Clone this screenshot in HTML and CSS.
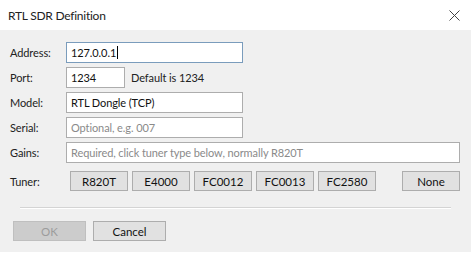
FILE: index.html
```html
<!DOCTYPE html>
<html>
<head>
<meta charset="utf-8">
<link rel="stylesheet" href="styles.css">
</head>
<body>
<div class="dialog">
  <div class="titlebar">
    <span class="title">RTL SDR Definition</span>
    <svg class="close" width="11" height="11" viewBox="0 0 11 11"><path d="M0.5 0.5L10.5 10.5M10.5 0.5L0.5 10.5" stroke="#444" stroke-width="1" fill="none"/></svg>
  </div>
  <div class="content">
    <div class="form">
      <label class="lbl">Address:</label>
      <div class="field"><div class="input focus w177">127.0.0.1<span class="caret"></span></div></div>
      <label class="lbl">Port:</label>
      <div class="field"><div class="input w59">1234</div><span class="hint">Default is 1234</span></div>
      <label class="lbl">Model:</label>
      <div class="field"><div class="input w177">RTL Dongle (TCP)</div></div>
      <label class="lbl">Serial:</label>
      <div class="field"><div class="input w177 ph">Optional, e.g. 007</div></div>
      <label class="lbl">Gains:</label>
      <div class="field"><div class="input w394 ph">Required, click tuner type below, normally R820T</div></div>
      <label class="lbl tunerlbl">Tuner:</label>
      <div class="field tuners">
        <div class="group">
          <button class="btn tb">R820T</button>
          <button class="btn tb">E4000</button>
          <button class="btn tb">FC0012</button>
          <button class="btn tb">FC0013</button>
          <button class="btn tb">FC2580</button>
        </div>
        <button class="btn tb">None</button>
      </div>
    </div>
    <div class="sep"></div>
    <div class="actions">
      <button class="btn ab disabled">OK</button>
      <button class="btn ab">Cancel</button>
    </div>
  </div>
</div>
</body>
</html>
```
FILE: styles.css
```css
html, body { margin: 0; padding: 0; background: #fff; }
body { font-family: "Lato", "Open Sans", sans-serif; font-size: 11px; letter-spacing: -0.1px; color: #000; width: 474px; height: 254px; overflow: hidden; }
.dialog { width: 471px; height: 252px; display: flex; flex-direction: column; }
.titlebar { height: 30px; background: #fff; display: flex; align-items: center; justify-content: space-between; padding: 0 11px 0 8px; box-sizing: border-box; }
.title { font-size: 12px; letter-spacing: -0.25px; color: #222; }
.close { display: block; }
.content { flex: 1; background: #f0f0f0; padding: 12px 0 0 0; box-sizing: border-box; }
.form { display: grid; grid-template-columns: 56px auto; row-gap: 4px; padding-left: 10px; }
.lbl { display: flex; align-items: center; height: 21px; color: #222; }
.field { display: flex; align-items: center; height: 21px; }
.input { height: 21px; box-sizing: border-box; background: #fff; border: 1px solid #adadad; padding: 0 4px; display: flex; align-items: center; white-space: nowrap; overflow: hidden; color: #111; }
.input.focus { border-color: #7a9cbc; }
.ph { color: #8a8a8a; }
.w177 { width: 177px; }
.w59 { width: 59px; }
.w394 { width: 394px; }
.caret { display: inline-block; width: 1px; height: 13px; background: #000; margin-left: 1px; }
.hint { margin-left: 6px; color: #222; }
.tunerlbl { margin-top: 4px; height: 20px; }
.tuners { margin-top: 4px; height: 20px; padding-left: 4px; width: 394px; box-sizing: border-box; justify-content: space-between; }
.group { display: flex; gap: 4px; }
.btn { font-family: inherit; font-size: 11.5px; letter-spacing: 0; color: #111; background: #e1e1e1; border: 1px solid #adadad; height: 20px; padding: 0; margin: 0; box-sizing: border-box; display: flex; align-items: center; justify-content: center; }
.tb { width: 58px; }
.sep { height: 1px; background: #d4d4d4; border-bottom: 1px solid #fff; margin: 16px 20px 0 20px; }
.actions { display: flex; gap: 7px; padding: 12px 0 0 13px; }
.ab { width: 73px; }
.disabled { background: #cccccc; border-color: #bfbfbf; color: #9c9c9c; }
```
